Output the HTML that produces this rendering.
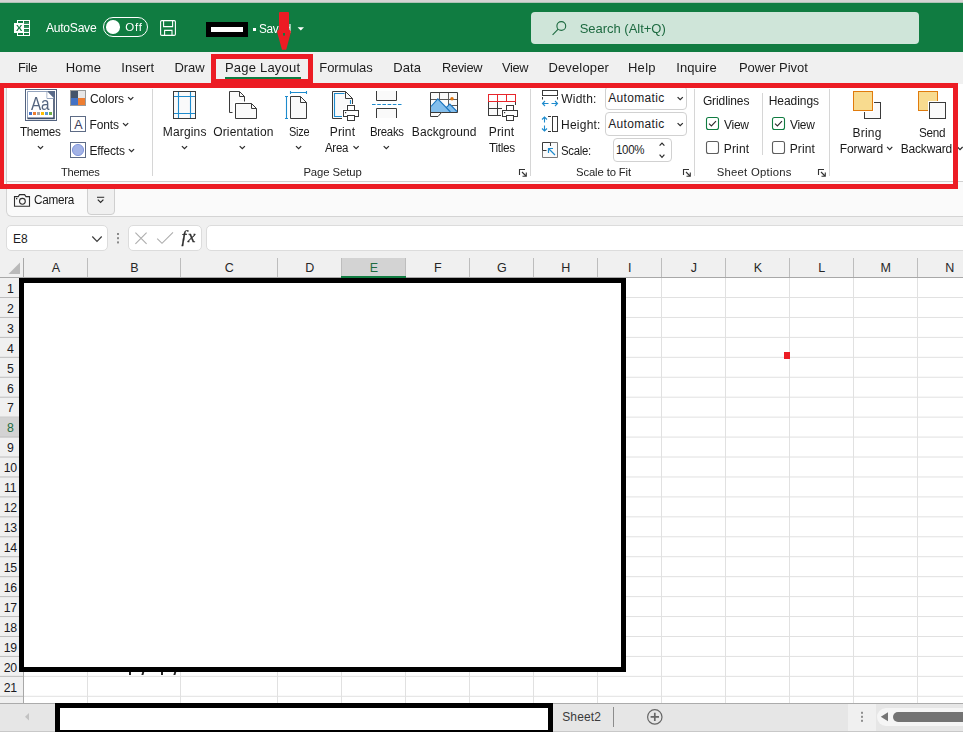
<!DOCTYPE html>
<html lang="en"><head><meta charset="utf-8"><title>Excel - Page Layout</title>
<style>
*{box-sizing:border-box;margin:0;padding:0}
html,body{width:963px;height:732px;overflow:hidden;background:#f0f0f0;font-family:"Liberation Sans",sans-serif}
#root{position:relative;width:963px;height:732px;overflow:hidden;background:#f0f0f0}
.abs{position:absolute}
.t{position:absolute;white-space:nowrap;line-height:1;font-size:12px;color:#262626;transform-origin:0 0}
.gl{position:absolute;left:0;top:0;width:963px;height:732px;will-change:transform;pointer-events:none}
svg.ov{position:absolute;left:0;top:0;width:963px;height:732px;overflow:hidden;pointer-events:none}
</style></head><body><div id="root">

<!-- part_title: panels -->
<div class="abs" style="left:0;top:0;width:963px;height:732px;background:#f0f0f0"></div>
<div class="abs" style="left:0;top:0;width:963px;height:52px;background:#107c41"></div>
<div class="abs" style="left:0;top:0;width:963px;height:2px;background:#d6d3d3"></div><div class="abs" style="left:0;top:2px;width:963px;height:1px;background:#aec2b6"></div>
<div class="abs" style="left:102.5px;top:17px;width:45.5px;height:20px;border:1.2px solid #fff;border-radius:10px"></div>
<div class="abs" style="left:106px;top:20.4px;width:13.7px;height:13.7px;border-radius:50%;background:#fff"></div>
<div class="abs" style="left:206px;top:22px;width:42px;height:15px;background:#000"></div>
<div class="abs" style="left:211px;top:27px;width:32px;height:5px;background:#fff"></div>
<div class="abs" style="left:253px;top:28px;width:3px;height:3px;background:#fff"></div>
<div class="abs" style="left:531px;top:12px;width:388px;height:32px;background:#cfe5d9;border-radius:4px"></div>
<div class="abs" style="left:225px;top:76.7px;width:76px;height:3px;background:#107c41"></div>
<!-- part_grid: panels -->
<div class="abs" style="left:6px;top:186px;width:962px;height:31px;background:#fafafa;border:1px solid #d4d4d4;border-top:none;border-radius:0 0 0 6px"></div>
<div class="abs" style="left:87px;top:186px;width:28px;height:29px;background:#f0f0f0;border:1px solid #cfcfcf;border-radius:0 0 4px 4px"></div>
<div class="abs" style="left:6px;top:225px;width:102px;height:26px;background:#fff;border:1px solid #dcdcdc;border-radius:5px"></div>
<div class="abs" style="left:128px;top:225px;width:74px;height:26px;background:#fff;border:1px solid #dcdcdc;border-radius:5px"></div>
<div class="abs" style="left:206px;top:225px;width:770px;height:26px;background:#fff;border:1px solid #dcdcdc;border-radius:5px"></div>
<div class="abs" style="left:24px;top:277px;width:939px;height:426px;background:#fff"></div>
<div class="abs" style="left:0;top:257px;width:963px;height:20px;background:#f0f0f0"></div>
<div class="abs" style="left:0;top:277px;width:23px;height:426px;background:#f0f0f0"></div>
<div class="abs" style="left:342px;top:258px;width:63px;height:19px;background:#d3d3d3"></div>
<div class="abs" style="left:0;top:417.6px;width:23px;height:19.9px;background:#d3d3d3"></div>
<div class="abs" style="left:22px;top:417.6px;width:2px;height:19.9px;background:#107c41"></div>
<div class="abs" style="left:129px;top:671px;width:1.6px;height:3.7px;background:#222;transform:skewX(0deg)"></div>
<div class="abs" style="left:142px;top:671px;width:1.6px;height:3.7px;background:#222;transform:skewX(-16deg)"></div>
<div class="abs" style="left:161px;top:671px;width:1.6px;height:3.7px;background:#222;transform:skewX(0deg)"></div>
<div class="abs" style="left:174px;top:671px;width:1.6px;height:3.7px;background:#222;transform:skewX(-16deg)"></div>
<div class="abs" style="left:0;top:703px;width:963px;height:29px;background:#e6e6e6;border-top:1px solid #ababab"></div>
<div class="abs" style="left:848px;top:704px;width:28px;height:27px;background:#f0f0f0"></div>
<div class="abs" style="left:877px;top:708px;width:100px;height:17.5px;background:#f5f5f5;border-radius:9px"></div>
<div class="abs" style="left:0;top:731px;width:963px;height:1px;background:#c8c8c8"></div>
<div class="abs" style="left:892.5px;top:712px;width:90px;height:9.5px;background:#737373;border-radius:5px"></div>
<!-- part_ribbon: panels -->
<div class="abs" style="left:6px;top:84px;width:960px;height:98px;background:#fff;border:1px solid #d0d0d0;border-top:none"></div>
<div class="abs" style="left:4px;top:182px;width:959px;height:5px;background:#fafafa"></div><div class="abs" style="left:6px;top:182px;width:1px;height:3px;background:#d0d0d0"></div>
<div class="abs" style="left:152px;top:89px;width:1px;height:87px;background:#d6d6d6"></div>
<div class="abs" style="left:530px;top:89px;width:1px;height:87px;background:#d6d6d6"></div>
<div class="abs" style="left:694px;top:89px;width:1px;height:87px;background:#d6d6d6"></div>
<div class="abs" style="left:829px;top:89px;width:1px;height:87px;background:#d6d6d6"></div>
<div class="abs" style="left:762px;top:93px;width:1px;height:62px;background:#d6d6d6"></div>
<div class="abs" style="left:605px;top:86px;width:82px;height:24px;background:#fff;border:1px solid #d1d1d1;border-radius:4px"></div>
<div class="abs" style="left:605px;top:112px;width:82px;height:24px;background:#fff;border:1px solid #d1d1d1;border-radius:4px"></div>
<div class="abs" style="left:613px;top:138px;width:59px;height:24px;background:#fff;border:1px solid #d1d1d1;border-radius:4px"></div>
<!-- part_title: icons -->
<svg class="ov" viewBox="0 0 963 732"><g><rect x="17" y="20" width="13" height="16" fill="#fff"/>
<g fill="#107c41"><rect x="18" y="21" width="5" height="2"/><rect x="18" y="33" width="5" height="2"/>
<rect x="24" y="21" width="5" height="2.8"/><rect x="24" y="25" width="5" height="2.8"/><rect x="24" y="29" width="5" height="2.8"/><rect x="24" y="33" width="5" height="2"/></g>
<g fill="#3d9366"><rect x="24" y="22" width="5" height="0.8"/><rect x="24" y="26" width="5" height="0.8"/><rect x="24" y="30" width="5" height="0.8"/></g>
<rect x="14" y="23" width="9.8" height="10" fill="#fff"/></g>
<g transform="translate(160,20)" fill="none" stroke="#fff" stroke-width="1.1">
<path d="M0.6 1.8Q0.6 0.6 1.8 0.6H14.2Q15.4 0.6 15.4 1.8V14.2Q15.4 15.4 14.2 15.4H1.8Q0.6 15.4 0.6 14.2Z"/>
<path d="M3.6 0.6V6.6H12.6V0.6"/><path d="M4.6 15.4V10.4H12V15.4"/></g>
<path d="M297.6 27.2H304L300.8 30.6Z" fill="#fff"/>
<g fill="none" stroke="#1d6a40" stroke-width="1.1"><circle cx="561.3" cy="26" r="4.4"/><path d="M558.2 29.2L552.6 34.8"/></g></svg>
<!-- part_grid: icons -->
<svg class="ov" viewBox="0 0 963 732"><g fill="none" stroke="#2e2e2e" stroke-width="1.1"><path d="M14.5 196.6H18.2L19.6 194.6H24.6L26 196.6H29.5V206.2H14.5Z"/>
<circle cx="22.4" cy="201.3" r="2.9"/></g><rect x="16" y="198" width="1.3" height="1.3" fill="#2e2e2e"/>
<path d="M97 197.3H104.2" stroke="#3b3b3b" stroke-width="1.1" fill="none"/><path d="M97.80 199.70L100.60 202.50L103.40 199.70" fill="none" stroke="#2b2b2b" stroke-width="1.2"/>
<path d="M92.30 236.50L97.00 241.30L101.70 236.50" fill="none" stroke="#3b3b3b" stroke-width="1.2"/>
<rect x="117" y="233" width="2" height="2" fill="#8a8a8a"/>
<rect x="117" y="237.2" width="2" height="2" fill="#8a8a8a"/>
<rect x="117" y="241.4" width="2" height="2" fill="#8a8a8a"/>
<path d="M135.4 232.6L146.6 243.8M146.6 232.6L135.4 243.8" stroke="#adadad" stroke-width="1.1" fill="none"/>
<path d="M157.2 238.6L162 243.3L173 232.4" stroke="#adadad" stroke-width="1.1" fill="none"/>
<rect x="24" y="297.00" width="939" height="1" fill="#e1e1e1"/>
<rect x="0" y="297.00" width="23" height="1" fill="#bcbcbc"/>
<rect x="24" y="316.94" width="939" height="1" fill="#e1e1e1"/>
<rect x="0" y="316.94" width="23" height="1" fill="#bcbcbc"/>
<rect x="24" y="336.88" width="939" height="1" fill="#e1e1e1"/>
<rect x="0" y="336.88" width="23" height="1" fill="#bcbcbc"/>
<rect x="24" y="356.82" width="939" height="1" fill="#e1e1e1"/>
<rect x="0" y="356.82" width="23" height="1" fill="#bcbcbc"/>
<rect x="24" y="376.76" width="939" height="1" fill="#e1e1e1"/>
<rect x="0" y="376.76" width="23" height="1" fill="#bcbcbc"/>
<rect x="24" y="396.70" width="939" height="1" fill="#e1e1e1"/>
<rect x="0" y="396.70" width="23" height="1" fill="#bcbcbc"/>
<rect x="24" y="416.64" width="939" height="1" fill="#e1e1e1"/>
<rect x="0" y="416.64" width="23" height="1" fill="#bcbcbc"/>
<rect x="24" y="436.58" width="939" height="1" fill="#e1e1e1"/>
<rect x="0" y="436.58" width="23" height="1" fill="#bcbcbc"/>
<rect x="24" y="456.52" width="939" height="1" fill="#e1e1e1"/>
<rect x="0" y="456.52" width="23" height="1" fill="#bcbcbc"/>
<rect x="24" y="476.46" width="939" height="1" fill="#e1e1e1"/>
<rect x="0" y="476.46" width="23" height="1" fill="#bcbcbc"/>
<rect x="24" y="496.40" width="939" height="1" fill="#e1e1e1"/>
<rect x="0" y="496.40" width="23" height="1" fill="#bcbcbc"/>
<rect x="24" y="516.34" width="939" height="1" fill="#e1e1e1"/>
<rect x="0" y="516.34" width="23" height="1" fill="#bcbcbc"/>
<rect x="24" y="536.28" width="939" height="1" fill="#e1e1e1"/>
<rect x="0" y="536.28" width="23" height="1" fill="#bcbcbc"/>
<rect x="24" y="556.22" width="939" height="1" fill="#e1e1e1"/>
<rect x="0" y="556.22" width="23" height="1" fill="#bcbcbc"/>
<rect x="24" y="576.16" width="939" height="1" fill="#e1e1e1"/>
<rect x="0" y="576.16" width="23" height="1" fill="#bcbcbc"/>
<rect x="24" y="596.10" width="939" height="1" fill="#e1e1e1"/>
<rect x="0" y="596.10" width="23" height="1" fill="#bcbcbc"/>
<rect x="24" y="616.04" width="939" height="1" fill="#e1e1e1"/>
<rect x="0" y="616.04" width="23" height="1" fill="#bcbcbc"/>
<rect x="24" y="635.98" width="939" height="1" fill="#e1e1e1"/>
<rect x="0" y="635.98" width="23" height="1" fill="#bcbcbc"/>
<rect x="24" y="655.92" width="939" height="1" fill="#e1e1e1"/>
<rect x="0" y="655.92" width="23" height="1" fill="#bcbcbc"/>
<rect x="24" y="675.86" width="939" height="1" fill="#e1e1e1"/>
<rect x="0" y="675.86" width="23" height="1" fill="#bcbcbc"/>
<rect x="24" y="695.80" width="939" height="1" fill="#e1e1e1"/>
<rect x="0" y="695.80" width="23" height="1" fill="#bcbcbc"/>
<rect x="87" y="277" width="1" height="426" fill="#e1e1e1"/>
<rect x="87" y="258" width="1" height="19" fill="#bdbdbd"/>
<rect x="180" y="277" width="1" height="426" fill="#e1e1e1"/>
<rect x="180" y="258" width="1" height="19" fill="#bdbdbd"/>
<rect x="277" y="277" width="1" height="426" fill="#e1e1e1"/>
<rect x="277" y="258" width="1" height="19" fill="#bdbdbd"/>
<rect x="341" y="277" width="1" height="426" fill="#e1e1e1"/>
<rect x="341" y="258" width="1" height="19" fill="#bdbdbd"/>
<rect x="405" y="277" width="1" height="426" fill="#e1e1e1"/>
<rect x="405" y="258" width="1" height="19" fill="#bdbdbd"/>
<rect x="469" y="277" width="1" height="426" fill="#e1e1e1"/>
<rect x="469" y="258" width="1" height="19" fill="#bdbdbd"/>
<rect x="533" y="277" width="1" height="426" fill="#e1e1e1"/>
<rect x="533" y="258" width="1" height="19" fill="#bdbdbd"/>
<rect x="597" y="277" width="1" height="426" fill="#e1e1e1"/>
<rect x="597" y="258" width="1" height="19" fill="#bdbdbd"/>
<rect x="661" y="277" width="1" height="426" fill="#e1e1e1"/>
<rect x="661" y="258" width="1" height="19" fill="#bdbdbd"/>
<rect x="725" y="277" width="1" height="426" fill="#e1e1e1"/>
<rect x="725" y="258" width="1" height="19" fill="#bdbdbd"/>
<rect x="789" y="277" width="1" height="426" fill="#e1e1e1"/>
<rect x="789" y="258" width="1" height="19" fill="#bdbdbd"/>
<rect x="853" y="277" width="1" height="426" fill="#e1e1e1"/>
<rect x="853" y="258" width="1" height="19" fill="#bdbdbd"/>
<rect x="917" y="277" width="1" height="426" fill="#e1e1e1"/>
<rect x="917" y="258" width="1" height="19" fill="#bdbdbd"/>
<rect x="23" y="258" width="1" height="445" fill="#a8a8a8"/>
<rect x="0" y="277" width="963" height="1" fill="#a8a8a8"/>
<path d="M20 262.5V274H8.5Z" fill="#b9b9b9"/>
<rect x="341" y="276" width="65" height="2" fill="#107c41"/>
<path d="M29 713V720.4L25 716.7Z" fill="#c2c2c2"/>
<rect x="613" y="707" width="1" height="20" fill="#8c8c8c"/>
<g fill="none" stroke="#666" stroke-width="1.2"><circle cx="654.8" cy="716.9" r="7.2"/><path d="M650.6 716.9H659M654.8 712.7V721.1" stroke-width="1.7"/></g>
<rect x="861" y="711.8" width="2" height="2" fill="#8e8e8e"/>
<rect x="861" y="715.8" width="2" height="2" fill="#8e8e8e"/>
<rect x="861" y="719.8" width="2" height="2" fill="#8e8e8e"/>
<path d="M888 712.2V721.2L880.8 716.7Z" fill="#757575"/></svg>
<!-- part_ribbon: icons -->
<svg class="ov" viewBox="0 0 963 732"><g transform="translate(25,89)">
<rect x="0.5" y="0.5" width="31" height="31" fill="#fff" stroke="#52627f" stroke-width="1"/>
<rect x="2" y="2" width="28" height="28" fill="#fff"/>
<path d="M2.5 29.5V2.5H22" fill="none" stroke="#93a3bd" stroke-width="1"/>
<path d="M2.5 29.4H29V9" fill="none" stroke="#3c4d69" stroke-width="1.6"/>
<path d="M21.8 2H30V10.2Z" fill="#596a89"/>
<path d="M22 2.5V9.5H28.6" fill="none" stroke="#93a3bd" stroke-width="1"/>
<path d="M22.5 3.3V9H28.2Z" fill="#fff"/>
<rect x="4" y="23" width="3" height="3" fill="#4472c4"/><rect x="8" y="23" width="3" height="3" fill="#ed7d31"/>
<rect x="12" y="23" width="3" height="3" fill="#a5a5a5"/><rect x="16" y="23" width="3" height="3" fill="#ffc000"/>
<rect x="20" y="23" width="3" height="3" fill="#5b9bd5"/><rect x="24" y="23" width="3" height="3" fill="#70ad47"/>
</g>
<path d="M37.90 146.05L40.50 148.75L43.10 146.05" fill="none" stroke="#2b2b2b" stroke-width="1.2"/>
<g transform="translate(70,90)"><rect x="0" y="0" width="16" height="16" fill="#9a9a9a"/>
<rect x="1" y="1" width="7" height="7" fill="#44546a"/><rect x="8" y="1" width="7" height="7" fill="#e7e6e6"/>
<rect x="1" y="8" width="7" height="7" fill="#4472c4"/><rect x="8" y="8" width="7" height="7" fill="#ed7d31"/></g>
<path d="M128.10 97.05L130.70 99.75L133.30 97.05" fill="none" stroke="#2b2b2b" stroke-width="1.2"/>
<rect x="70.5" y="116.5" width="15" height="15" fill="#fff" stroke="#5d6b85"/>
<path d="M123.00 123.05L125.60 125.75L128.20 123.05" fill="none" stroke="#2b2b2b" stroke-width="1.2"/>
<rect x="70.5" y="142.5" width="15" height="15" fill="#fff" stroke="#5d6b85"/><circle cx="78" cy="150" r="5.6" fill="#a3b3e6" stroke="#6f86d6" stroke-width="0.8"/>
<path d="M128.90 149.05L131.50 151.75L134.10 149.05" fill="none" stroke="#2b2b2b" stroke-width="1.2"/>
<rect x="173.5" y="91.5" width="22" height="27" fill="#fafafa" stroke="#3a3a3a"/>
<path d="M178.5 92V118M190.5 92V118M174 96.5H195M174 113.5H195" stroke="#1e8bcd" stroke-width="1.1" fill="none"/>
<path d="M181.90 146.05L184.50 148.75L187.10 146.05" fill="none" stroke="#2b2b2b" stroke-width="1.2"/>
<path d="M229.5 91.5H239.5L244.5 96.5V112.5H229.5Z" fill="#fafafa" stroke="none"/><rect x="233" y="101.5" width="14" height="13" fill="#fff"/><path d="M232.5 112.5H229.5V91.5H239.5L244.5 96.5V101.5" fill="none" stroke="#3a3a3a"/>
<path d="M239.5 91.5V96.5H244.5" fill="none" stroke="#3a3a3a"/>
<path d="M235.5 103.5H251.5L256.5 108.5V118.5H235.5Z" fill="#fafafa" stroke="#3a3a3a"/>
<path d="M251.5 103.5V108.5H256.5" fill="none" stroke="#3a3a3a"/>
<path d="M239.70 146.05L242.30 148.75L244.90 146.05" fill="none" stroke="#2b2b2b" stroke-width="1.2"/>
<path d="M290.5 96.5H300.5L306.5 102.5V118.5H290.5Z" fill="#fafafa" stroke="#3a3a3a"/>
<path d="M300.5 96.5V102.5H306.5" fill="none" stroke="#3a3a3a"/>
<path d="M290.5 92.5H306.5M290.5 91V94M306.5 91V94M286.5 96.5V118.5M285 96.5H288M285 118.5H288" stroke="#1e8bcd" stroke-width="1.1" fill="none"/>
<path d="M296.00 146.05L298.60 148.75L301.20 146.05" fill="none" stroke="#2b2b2b" stroke-width="1.2"/>
<path d="M342 118.5H332.5V91.5H345.5L352.5 98.5V105" fill="#fafafa" stroke="#3a3a3a"/>
<path d="M345.5 91.5V98.5H352.5" fill="none" stroke="#3a3a3a"/>
<path d="M342 116.5H334.5V93.5H344.5M350.5 100V105" fill="none" stroke="#1e8bcd" stroke-width="1.1"/>
<g transform="translate(343,105)"><rect x="-1" y="4" width="18" height="9.5" fill="#fff"/><rect x="3" y="-1" width="10" height="18" fill="#fff"/>
<rect x="4.5" y="0.5" width="7" height="5" fill="#fff" stroke="#3a3a3a"/>
<rect x="0.5" y="5.5" width="15" height="6" fill="#fff" stroke="#3a3a3a"/>
<rect x="4.5" y="10.5" width="7" height="5" fill="#fff" stroke="#3a3a3a"/>
<rect x="2" y="7" width="1.2" height="1.2" fill="#3a3a3a"/></g>
<path d="M353.50 146.05L356.10 148.75L358.70 146.05" fill="none" stroke="#2b2b2b" stroke-width="1.2"/>
<path d="M376.5 91V100.5H396.5V91" fill="#fafafa" stroke="#3a3a3a"/>
<path d="M376.5 118V108.5H396.5V118" fill="#fafafa" stroke="#3a3a3a"/>
<path d="M372 104.5H401.5" stroke="#1e8bcd" stroke-width="1.1" stroke-dasharray="3.6 1.6" fill="none"/>
<path d="M383.70 146.05L386.30 148.75L388.90 146.05" fill="none" stroke="#2b2b2b" stroke-width="1.2"/>
<path d="M430.5 92.5H457.5V112.5H441.5L438 116.5H430.5Z" fill="#fafafa" stroke="#3a3a3a"/>
<path d="M439.5 93V99M448.5 93V105M431 99.5H457M448.5 105.5H457" stroke="#5c5c5c" stroke-width="1" fill="none"/>
<path d="M431 106.5L437.8 98.8L446 107.8L449.8 104L457 111.5V112H431Z" fill="#83beec" stroke="none"/>
<path d="M431 106.5L437.8 98.8L450.5 112M446 107.8L449.8 104L457 111.5" fill="none" stroke="#1a75c0" stroke-width="1.1"/>
<circle cx="452" cy="98.7" r="1.7" fill="#e0750c"/>
<path d="M430.5 112.5H441.5" stroke="#3a3a3a" fill="none"/>
<path d="M488.5 102V115.5H502M497.5 102V115.5M488.5 108.5H502" fill="none" stroke="#3a3a3a"/>
<rect x="489" y="102" width="13" height="13" fill="#fafafa" stroke="none"/>
<path d="M488.5 102V115.5H502M497.5 102V115.5M488.5 108.5H502M515.5 102V105" fill="none" stroke="#3a3a3a"/>
<rect x="488.5" y="94.5" width="27" height="7" fill="#fff" stroke="#e8262c"/>
<path d="M497.5 94.5V101.5M506.5 94.5V101.5" stroke="#e8262c" fill="none"/>
<g transform="translate(502,105)"><rect x="-1" y="4" width="18" height="9.5" fill="#fff"/><rect x="3" y="-1" width="10" height="18" fill="#fff"/>
<rect x="4.5" y="0.5" width="7" height="5" fill="#fff" stroke="#3a3a3a"/>
<rect x="0.5" y="5.5" width="15" height="6" fill="#fff" stroke="#3a3a3a"/>
<rect x="4.5" y="10.5" width="7" height="5" fill="#fff" stroke="#3a3a3a"/>
<rect x="2" y="7" width="1.2" height="1.2" fill="#3a3a3a"/></g>
<g transform="translate(519.5,169.5)" fill="none" stroke="#333" stroke-width="1.1"><path d="M0 5.5V0H5.5"/><path d="M2.5 2.5L6.5 6.5M6.8 3V6.8H3"/></g>
<g transform="translate(683.5,169.5)" fill="none" stroke="#333" stroke-width="1.1"><path d="M0 5.5V0H5.5"/><path d="M2.5 2.5L6.5 6.5M6.8 3V6.8H3"/></g>
<g transform="translate(818.5,169.5)" fill="none" stroke="#333" stroke-width="1.1"><path d="M0 5.5V0H5.5"/><path d="M2.5 2.5L6.5 6.5M6.8 3V6.8H3"/></g>
<rect x="542.5" y="90.5" width="15" height="5" fill="#fff" stroke="#3a3a3a"/>
<path d="M542.5 97V99.5M557.5 97V99.5" stroke="#3a3a3a" fill="none"/>
<path d="M542.5 103.5H548.5M545 101L542.5 103.5L545 106M551.5 103.5H557.5M555 101L557.5 103.5L555 106" stroke="#1e8bcd" stroke-width="1.1" fill="none"/>
<rect x="552.5" y="116.5" width="5" height="15" fill="#fff" stroke="#3a3a3a"/>
<path d="M548 116.5H551M548 131.5H551" stroke="#3a3a3a" fill="none"/>
<path d="M544.5 117V122.5M542 119.5L544.5 117L547 119.5M544.5 125.5V131M542 128.5L544.5 131L547 128.5" stroke="#1e8bcd" stroke-width="1.1" fill="none"/>
<path d="M550.5 142.5H557.5V157.5H542.5V150.5" fill="#fafafa" stroke="#7a7a7a"/>
<path d="M546.5 150.5H542.5V142.5H550.5V146" fill="none" stroke="#3a3a3a"/>
<path d="M555 155L548.5 148.5M548.5 153V148.5H553" stroke="#1e8bcd" stroke-width="1.2" fill="none"/>
<path d="M677.60 97.05L680.20 99.75L682.80 97.05" fill="none" stroke="#2b2b2b" stroke-width="1.2"/>
<path d="M677.60 123.05L680.20 125.75L682.80 123.05" fill="none" stroke="#2b2b2b" stroke-width="1.2"/>
<path d="M659.60 145.70L662.00 143.10L664.40 145.70" fill="none" stroke="#2b2b2b" stroke-width="1.2"/>
<path d="M659.60 154.70L662.00 157.30L664.40 154.70" fill="none" stroke="#2b2b2b" stroke-width="1.2"/>
<rect x="706.5" y="117.5" width="12" height="12" rx="2" fill="#fff" stroke="#107c41" stroke-width="1.1"/>
<path d="M709 123.6L711.4 126L716 121.2" fill="none" stroke="#2b2b2b" stroke-width="1.1"/>
<rect x="706.5" y="141.5" width="12" height="12" rx="2" fill="#fff" stroke="#5e5e5e" stroke-width="1.1"/>
<rect x="772.5" y="117.5" width="12" height="12" rx="2" fill="#fff" stroke="#107c41" stroke-width="1.1"/>
<path d="M775 123.6L777.4 126L782 121.2" fill="none" stroke="#2b2b2b" stroke-width="1.1"/>
<rect x="772.5" y="141.5" width="12" height="12" rx="2" fill="#fff" stroke="#5e5e5e" stroke-width="1.1"/>
<rect x="864.5" y="102.5" width="16" height="16" fill="#fafafa" stroke="#3a3a3a"/>
<rect x="852" y="90" width="22" height="22" fill="#fff"/>
<rect x="853.5" y="91.5" width="19" height="19" fill="#f8db8f" stroke="#e07b0c"/>
<rect x="918.5" y="91.5" width="19" height="19" fill="#f8db8f" stroke="#e07b0c"/>
<rect x="928" y="101" width="19" height="19" fill="#fff"/>
<rect x="929.5" y="102.5" width="16" height="16" fill="#fafafa" stroke="#3a3a3a"/>
<path d="M887.10 146.95L889.70 149.65L892.30 146.95" fill="none" stroke="#2b2b2b" stroke-width="1.2"/>
<path d="M957.40 146.95L960.00 149.65L962.60 146.95" fill="none" stroke="#2b2b2b" stroke-width="1.2"/></svg>
<!-- field / header text -->
<div class="t l" style="left:13.04px;top:233px;font-size:12px;letter-spacing:0.00px;color:#1c1c22;">E8</div>
<div class="t l" style="left:51.63px;top:262px;font-size:12.5px;color:#262626">A</div>
<div class="t l" style="left:130.13px;top:262px;font-size:12.5px;color:#262626">B</div>
<div class="t l" style="left:224.79px;top:262px;font-size:12.5px;color:#262626">C</div>
<div class="t l" style="left:305.29px;top:262px;font-size:12.5px;color:#262626">D</div>
<div class="t l" style="left:369.63px;top:262px;font-size:12.5px;color:#1e6b41">E</div>
<div class="t l" style="left:433.98px;top:262px;font-size:12.5px;color:#262626">F</div>
<div class="t l" style="left:496.94px;top:262px;font-size:12.5px;color:#262626">G</div>
<div class="t l" style="left:561.29px;top:262px;font-size:12.5px;color:#262626">H</div>
<div class="t l" style="left:628.06px;top:262px;font-size:12.5px;color:#262626">I</div>
<div class="t l" style="left:690.67px;top:262px;font-size:12.5px;color:#262626">J</div>
<div class="t l" style="left:753.63px;top:262px;font-size:12.5px;color:#262626">K</div>
<div class="t l" style="left:818.32px;top:262px;font-size:12.5px;color:#262626">L</div>
<div class="t l" style="left:880.59px;top:262px;font-size:12.5px;color:#262626">M</div>
<div class="t l" style="left:945.29px;top:262px;font-size:12.5px;color:#262626">N</div>
<div class="t l" style="left:6.93px;top:283px;font-size:12.3px;letter-spacing:-0.3px;color:#1a1a1f">1</div>
<div class="t l" style="left:6.93px;top:303px;font-size:12.3px;letter-spacing:-0.3px;color:#1a1a1f">2</div>
<div class="t l" style="left:6.93px;top:323px;font-size:12.3px;letter-spacing:-0.3px;color:#1a1a1f">3</div>
<div class="t l" style="left:6.93px;top:343px;font-size:12.3px;letter-spacing:-0.3px;color:#1a1a1f">4</div>
<div class="t l" style="left:6.93px;top:363px;font-size:12.3px;letter-spacing:-0.3px;color:#1a1a1f">5</div>
<div class="t l" style="left:6.93px;top:383px;font-size:12.3px;letter-spacing:-0.3px;color:#1a1a1f">6</div>
<div class="t l" style="left:6.93px;top:402px;font-size:12.3px;letter-spacing:-0.3px;color:#1a1a1f">7</div>
<div class="t l" style="left:6.93px;top:422px;font-size:12.3px;letter-spacing:-0.3px;color:#1e6b41">8</div>
<div class="t l" style="left:6.93px;top:442px;font-size:12.3px;letter-spacing:-0.3px;color:#1a1a1f">9</div>
<div class="t l" style="left:3.66px;top:462px;font-size:12.3px;letter-spacing:-0.3px;color:#1a1a1f">10</div>
<div class="t l" style="left:4.12px;top:482px;font-size:12.3px;letter-spacing:-0.3px;color:#1a1a1f">11</div>
<div class="t l" style="left:3.66px;top:502px;font-size:12.3px;letter-spacing:-0.3px;color:#1a1a1f">12</div>
<div class="t l" style="left:3.66px;top:522px;font-size:12.3px;letter-spacing:-0.3px;color:#1a1a1f">13</div>
<div class="t l" style="left:3.66px;top:542px;font-size:12.3px;letter-spacing:-0.3px;color:#1a1a1f">14</div>
<div class="t l" style="left:3.66px;top:562px;font-size:12.3px;letter-spacing:-0.3px;color:#1a1a1f">15</div>
<div class="t l" style="left:3.66px;top:582px;font-size:12.3px;letter-spacing:-0.3px;color:#1a1a1f">16</div>
<div class="t l" style="left:3.66px;top:602px;font-size:12.3px;letter-spacing:-0.3px;color:#1a1a1f">17</div>
<div class="t l" style="left:3.66px;top:622px;font-size:12.3px;letter-spacing:-0.3px;color:#1a1a1f">18</div>
<div class="t l" style="left:3.66px;top:642px;font-size:12.3px;letter-spacing:-0.3px;color:#1a1a1f">19</div>
<div class="t l" style="left:3.66px;top:662px;font-size:12.3px;letter-spacing:-0.3px;color:#1a1a1f">20</div>
<div class="t l" style="left:3.66px;top:682px;font-size:12.3px;letter-spacing:-0.3px;color:#1a1a1f">21</div>
<div class="t l" style="left:562.16px;top:711px;font-size:12px;letter-spacing:0.16px;color:#3a3a3a;">Sheet2</div>
<div class="t l" style="left:74.20px;top:119px;font-size:12.5px;letter-spacing:0.00px;color:#3b3b5a;">A</div>
<div class="t l" style="left:608.20px;top:92px;font-size:12px;letter-spacing:0.34px;color:#1c1c24;">Automatic</div>
<div class="t l" style="left:608.20px;top:118px;font-size:12px;letter-spacing:0.34px;color:#1c1c24;">Automatic</div>
<div class="t l" style="left:615.84px;top:144px;font-size:12px;letter-spacing:-0.30px;color:#1c1c24;transform:scaleX(0.958);">100%</div>
<!-- ui label text -->
<div class="gl">
<div class="t" style="left:15.7px;top:23.4px;font-size:9.5px;font-weight:bold;color:#107c41;transform:scaleX(0.96);will-change:transform">X</div>
<div class="t" style="left:46.10px;top:21px;font-size:13px;letter-spacing:-0.30px;color:#fff;transform:scaleX(0.933);">AutoSave</div>
<div class="t" style="left:125.18px;top:22px;font-size:11.5px;letter-spacing:0.82px;color:#fff;">Off</div>
<div class="t" style="left:259.47px;top:23px;font-size:12px;letter-spacing:-0.30px;color:#fff;transform:scaleX(0.984);">Saved</div>
<div class="t" style="left:579.71px;top:22px;font-size:13px;letter-spacing:-0.02px;color:#1d6a40;">Search (Alt+Q)</div>
<div class="t" style="left:18.28px;top:61px;font-size:13px;letter-spacing:-0.30px;color:#1c1c1c;transform:scaleX(0.983);">File</div>
<div class="t" style="left:65.66px;top:61px;font-size:13px;letter-spacing:0.19px;color:#1c1c1c;">Home</div>
<div class="t" style="left:121.23px;top:61px;font-size:13px;letter-spacing:0.07px;color:#1c1c1c;">Insert</div>
<div class="t" style="left:174.56px;top:61px;font-size:13px;letter-spacing:-0.07px;color:#1c1c1c;">Draw</div>
<div class="t" style="left:224.96px;top:61px;font-size:13px;letter-spacing:0.21px;color:#1c1c1c;">Page Layout</div>
<div class="t" style="left:319.36px;top:61px;font-size:13px;letter-spacing:-0.12px;color:#1c1c1c;">Formulas</div>
<div class="t" style="left:393.26px;top:61px;font-size:13px;letter-spacing:0.10px;color:#1c1c1c;">Data</div>
<div class="t" style="left:441.58px;top:61px;font-size:13px;letter-spacing:-0.30px;color:#1c1c1c;transform:scaleX(0.983);">Review</div>
<div class="t" style="left:502.44px;top:61px;font-size:13px;letter-spacing:-0.30px;color:#1c1c1c;transform:scaleX(0.982);">View</div>
<div class="t" style="left:548.46px;top:61px;font-size:13px;letter-spacing:0.14px;color:#1c1c1c;">Developer</div>
<div class="t" style="left:627.96px;top:61px;font-size:13px;letter-spacing:0.28px;color:#1c1c1c;">Help</div>
<div class="t" style="left:676.23px;top:61px;font-size:13px;letter-spacing:0.11px;color:#1c1c1c;">Inquire</div>
<div class="t" style="left:738.96px;top:61px;font-size:13px;letter-spacing:-0.05px;color:#1c1c1c;">Power Pivot</div>
<div class="t" style="left:34.21px;top:194px;font-size:12px;letter-spacing:-0.30px;color:#1a1a1a;transform:scaleX(0.979);">Camera</div>
<div class="t" style="left:181.62px;top:228px;font-size:17.5px;letter-spacing:1.20px;color:#2e2e2e;-webkit-text-stroke:0.3px #2e2e2e;font-family:'Liberation Serif',serif;font-style:italic;">fx</div>
<div class="t" style="left:31.20px;top:95px;font-size:18.5px;letter-spacing:-0.30px;color:#55657f;transform:scaleX(0.826);">Aa</div>
<div class="t" style="left:20.47px;top:126px;font-size:12px;letter-spacing:-0.30px;color:#1a1a1a;transform:scaleX(0.974);">Themes</div>
<div class="t" style="left:89.90px;top:93px;font-size:12px;letter-spacing:-0.09px;color:#1a1a1a;">Colors</div>
<div class="t" style="left:89.54px;top:119px;font-size:12px;letter-spacing:-0.13px;color:#1a1a1a;">Fonts</div>
<div class="t" style="left:89.54px;top:145px;font-size:12px;letter-spacing:-0.17px;color:#1a1a1a;">Effects</div>
<div class="t" style="left:61.38px;top:167px;font-size:11.3px;letter-spacing:-0.30px;color:#262626;transform:scaleX(0.985);">Themes</div>
<div class="t" style="left:162.84px;top:126px;font-size:12px;letter-spacing:0.15px;color:#1a1a1a;">Margins</div>
<div class="t" style="left:213.16px;top:126px;font-size:12px;letter-spacing:0.16px;color:#1a1a1a;">Orientation</div>
<div class="t" style="left:288.71px;top:126px;font-size:12px;letter-spacing:-0.30px;color:#1a1a1a;transform:scaleX(0.913);">Size</div>
<div class="t" style="left:329.74px;top:126px;font-size:12px;letter-spacing:0.14px;color:#1a1a1a;">Print</div>
<div class="t" style="left:325.20px;top:142px;font-size:12px;letter-spacing:-0.30px;color:#1a1a1a;transform:scaleX(0.954);">Area</div>
<div class="t" style="left:369.59px;top:126px;font-size:12px;letter-spacing:-0.30px;color:#1a1a1a;transform:scaleX(0.949);">Breaks</div>
<div class="t" style="left:411.84px;top:126px;font-size:12px;letter-spacing:0.06px;color:#1a1a1a;">Background</div>
<div class="t" style="left:488.74px;top:126px;font-size:12px;letter-spacing:0.17px;color:#1a1a1a;">Print</div>
<div class="t" style="left:489.26px;top:142px;font-size:12px;letter-spacing:-0.30px;color:#1a1a1a;transform:scaleX(0.979);">Titles</div>
<div class="t" style="left:303.40px;top:167px;font-size:11.3px;letter-spacing:-0.07px;color:#262626;">Page Setup</div>
<div class="t" style="left:561.24px;top:93px;font-size:12px;letter-spacing:0.24px;color:#1a1a1a;">Width:</div>
<div class="t" style="left:561.04px;top:119px;font-size:12px;letter-spacing:0.23px;color:#1a1a1a;">Height:</div>
<div class="t" style="left:561.09px;top:145px;font-size:12px;letter-spacing:-0.30px;color:#1a1a1a;transform:scaleX(0.948);">Scale:</div>
<div class="t" style="left:576.09px;top:167px;font-size:11.3px;letter-spacing:-0.14px;color:#262626;">Scale to Fit</div>
<div class="t" style="left:702.90px;top:95px;font-size:12px;letter-spacing:-0.10px;color:#1a1a1a;">Gridlines</div>
<div class="t" style="left:768.64px;top:95px;font-size:12px;letter-spacing:-0.03px;color:#1a1a1a;">Headings</div>
<div class="t" style="left:723.94px;top:119px;font-size:12px;letter-spacing:-0.25px;color:#1a1a1a;">View</div>
<div class="t" style="left:723.74px;top:143px;font-size:12px;letter-spacing:0.16px;color:#1a1a1a;">Print</div>
<div class="t" style="left:790.04px;top:119px;font-size:12px;letter-spacing:-0.30px;color:#1a1a1a;transform:scaleX(0.994);">View</div>
<div class="t" style="left:789.74px;top:143px;font-size:12px;letter-spacing:0.11px;color:#1a1a1a;">Print</div>
<div class="t" style="left:716.69px;top:167px;font-size:11.3px;letter-spacing:0.26px;color:#262626;">Sheet Options</div>
<div class="t" style="left:852.44px;top:127px;font-size:12px;letter-spacing:0.23px;color:#1a1a1a;">Bring</div>
<div class="t" style="left:839.84px;top:143px;font-size:12px;letter-spacing:-0.11px;color:#1a1a1a;">Forward</div>
<div class="t" style="left:918.67px;top:127px;font-size:12px;letter-spacing:-0.30px;color:#1a1a1a;transform:scaleX(0.977);">Send</div>
<div class="t" style="left:900.74px;top:143px;font-size:12px;letter-spacing:-0.18px;color:#1a1a1a;">Backward</div>
</div>
<!-- annotations -->
<svg class="ov" viewBox="0 0 963 732"><path d="M279 13Q279 12 280 12H288Q289 12 289 13V29.5L290.8 31V32.5L286.2 49.8H282L277.2 32.5V31L279 29.5Z" fill="#ec1c24"/><rect x="283" y="33" width="2" height="2.6" fill="#107c41"/></svg>
<div class="abs" style="left:784px;top:352px;width:6px;height:7px;background:#ec1c24"></div>
<div class="abs" style="left:19px;top:278px;width:607px;height:394px;border:5px solid #000;background:#fff"></div>
<div class="abs" style="left:55px;top:703px;width:498px;height:29.5px;border:5px solid #000;border-bottom-width:3.5px;background:#fff"></div>
<div class="abs" style="left:0;top:83px;width:958px;height:106px;border:5px solid #ec1c24;border-left-width:4px"></div>
<div class="abs" style="left:211px;top:54px;width:102px;height:29.7px;border:5px solid #ec1c24"></div>
</div></body></html>
